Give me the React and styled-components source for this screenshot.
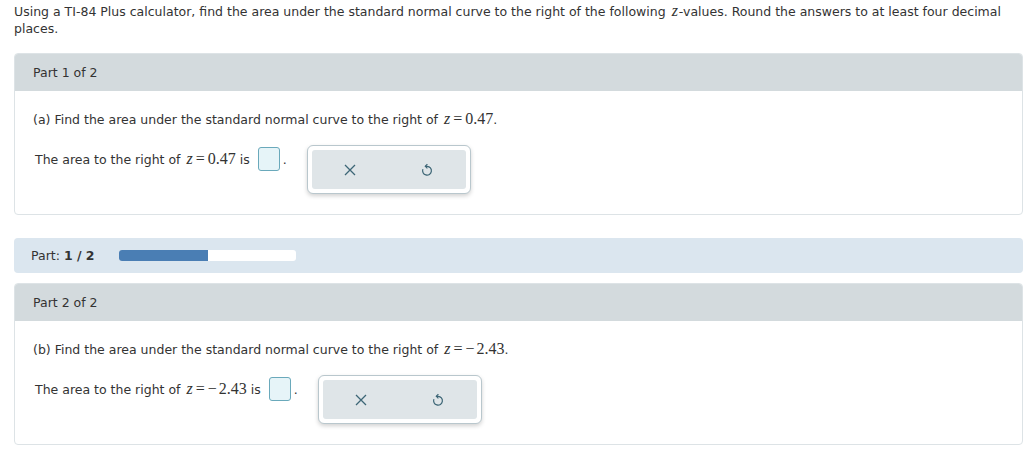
import React from 'react'
import styled, { createGlobalStyle } from 'styled-components'

const GlobalStyle = createGlobalStyle`
  body {
    margin: 0;
    background: #fff;
    color: #333;
    font-family: 'DejaVu Sans', Verdana, sans-serif;
    font-size: 12.5px;
  }
`

const Page = styled.div`
  padding: 3px 1px 0 14px;
`

const Intro = styled.p`
  margin: 0 10px 0 0;
  line-height: 17px;
`

const Card = styled.section`
  margin-top: ${(p) => p.top}px;
  border: 1px solid #dde3e6;
  border-radius: 4px;
  overflow: hidden;
`

const CardHeader = styled.div`
  height: 37px;
  display: flex;
  align-items: center;
  padding-left: 18px;
  background: #d3dadd;
`

const CardBody = styled.div`
  padding: 20px 18px 20px;
`

const Question = styled.div`
  line-height: 16px;
`

const AnswerRow = styled.div`
  display: flex;
  align-items: flex-start;
  margin-top: 17px;
  padding-left: 2px;
`

const Sentence = styled.div`
  display: flex;
  align-items: center;
  height: 24px;
  margin-top: 2px;
`

const Math = styled.span`
  font-family: 'Liberation Serif', 'Times New Roman', serif;
  font-size: 16px;
  line-height: 1;
  margin: 0 0 0 2px;

  & i {
    margin-right: 1px;
  }
`

const Eq = styled.span`
  margin: 0 3px 0 2px;
`

const Minus = styled.span`
  margin-right: 2px;
`

const AnswerBox = styled.span`
  display: inline-block;
  width: 20px;
  height: 22px;
  margin: 0 3px 0 8px;
  border: 1px solid #6aa9bb;
  border-radius: 3px;
  background: #e6f4f8;
`

const Toolbar = styled.div`
  margin-left: 20px;
  padding: 4px;
  border: 1px solid #b9c7cd;
  border-radius: 6px;
  background: #fff;
  box-shadow: 0 2px 4px rgba(0, 0, 0, 0.18);
`

const ToolInner = styled.div`
  display: flex;
  width: 154px;
  height: 39px;
  border-radius: 3px;
  background: #dfe5e8;
`

const ToolButton = styled.button`
  flex: 1;
  display: flex;
  align-items: center;
  justify-content: center;
  padding: 0;
  border: 0;
  background: transparent;
  color: #3d6676;
  cursor: pointer;
`

const Progress = styled.div`
  margin-top: 23px;
  height: 35px;
  display: flex;
  align-items: center;
  padding-left: 17px;
  border-radius: 4px;
  background: #dbe6ef;
`

const ProgressLabel = styled.span`
  width: 88px;
  & b {
    margin-left: 4px;
  }
`

const Track = styled.div`
  width: 177px;
  height: 11px;
  border-radius: 3px;
  background: #fff;
  overflow: hidden;
`

const Fill = styled.div`
  height: 100%;
  background: #4a7eb4;
`

const CloseIcon = () => (
  <svg width="12" height="12" viewBox="0 0 12 12">
    <path d="M1 1 L11 11 M11 1 L1 11" stroke="currentColor" strokeWidth="1.3" fill="none" />
  </svg>
)

const UndoIcon = () => (
  <svg width="12" height="14" viewBox="0 0 12 14">
    <path
      d="M1.9 6.1 A4.4 4.4 0 1 0 6.2 3.3 H4.4"
      stroke="currentColor"
      strokeWidth="1.2"
      fill="none"
    />
    <path d="M6.4 1.2 L4.3 3.3 L6.4 5.4" stroke="currentColor" strokeWidth="1.2" fill="none" />
  </svg>
)

const Z = ({ value, negative }) => (
  <Math>
    <i>z</i>
    <Eq>=</Eq>
    {negative && <Minus>{'\u2212'}</Minus>}
    {value}
  </Math>
)

const Part = ({ top, title, letter, value, negative }) => (
  <Card top={top}>
    <CardHeader>{title}</CardHeader>
    <CardBody>
      <Question>
        ({letter}) Find the area under the standard normal curve to the right of{' '}
        <Z value={value} negative={negative} />.
      </Question>
      <AnswerRow>
        <Sentence>
          The area to the right of&nbsp;<Z value={value} negative={negative} />&nbsp;is
          <AnswerBox />.
        </Sentence>
        <Toolbar>
          <ToolInner>
            <ToolButton aria-label="Clear">
              <CloseIcon />
            </ToolButton>
            <ToolButton aria-label="Undo">
              <UndoIcon />
            </ToolButton>
          </ToolInner>
        </Toolbar>
      </AnswerRow>
    </CardBody>
  </Card>
)

export default function App() {
  const done = 1
  const total = 2
  return (
    <Page>
      <GlobalStyle />
      <Intro>
        Using a TI-84 Plus calculator, find the area under the standard normal curve to the right of the
        following <Math><i>z</i></Math>-values. Round the answers to at least four decimal places.
      </Intro>
      <Part top={16} title="Part 1 of 2" letter="a" value="0.47" />
      <Progress>
        <ProgressLabel>
          Part:<b>1 / 2</b>
        </ProgressLabel>
        <Track>
          <Fill style={{ width: `${(done / total) * 100}%` }} />
        </Track>
      </Progress>
      <Part top={10} title="Part 2 of 2" letter="b" value="2.43" negative />
    </Page>
  )
}
